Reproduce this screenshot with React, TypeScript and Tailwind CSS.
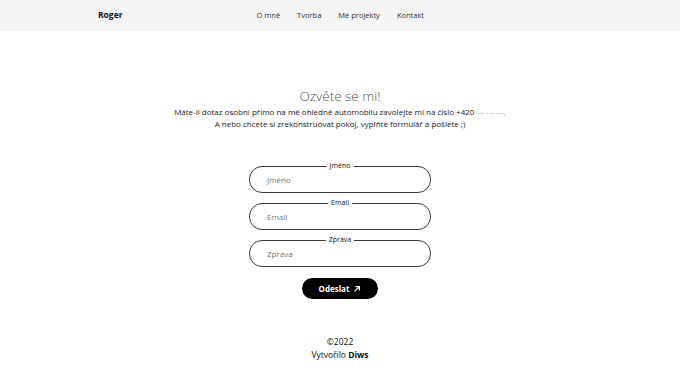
import React from "react";

function Field({ label }: { label: string }) {
  return (
    <div className="relative w-[182px] h-[27px] rounded-[13px] border-[1.5px] border-[#3a3a3a] flex items-center px-[17px]">
      <span className="absolute -top-[7px] left-1/2 -translate-x-1/2 bg-white px-[3px] text-[7px] leading-[12px] text-[#111]">{label}</span>
      <span className="text-[8px] text-[#777]">{label}</span>
    </div>
  );
}

export default function App() {
  return (
    <div className="w-[680px] h-[382px] bg-white flex flex-col" style={{ fontFamily: '"Open Sans", "Noto Sans", sans-serif' }}>
      <header className="h-[31px] bg-[#f5f5f5] flex items-center pl-[98px]">
        <span className="text-[8.5px] font-bold text-[#111]">Roger</span>
        <nav className="flex gap-[17px] ml-[134px] text-[7.5px] text-[#333]">
          <span>O mně</span>
          <span>Tvorba</span>
          <span>Mé projekty</span>
          <span>Kontakt</span>
        </nav>
      </header>
      <main className="flex flex-col items-center">
        <h1 className="mt-[56px] text-[13.5px] font-light text-[#555] leading-[18px]">Ozvěte se mi!</h1>
        <p className="mt-[1px] text-[8px] leading-[12px] text-[#222] text-center">
          Máte-li dotaz osobní přímo na mě ohledně automobilu zavolejte mi na číslo +420 <span className="text-[#aaa]">--- --- ---,</span>
          <br />A nebo chcete si zrekonstruovat pokoj, vyplňte formulář a pošlete ;)
        </p>
        <div className="mt-[36px] flex flex-col gap-[10px]">
          <Field label="Jméno" />
          <Field label="Email" />
          <Field label="Zpráva" />
        </div>
        <button className="mt-[11px] w-[76px] h-[21px] rounded-full bg-black text-white text-[8px] font-bold flex items-center justify-center gap-[4px]">
          Odeslat
          <svg width="8" height="8" viewBox="0 0 10 10" fill="none" stroke="white" strokeWidth="1.6">
            <path d="M2 8 L8 2 M3 2 H8 V7" />
          </svg>
        </button>
        <footer className="mt-[36px] flex flex-col items-center text-[8.5px] leading-[13px] text-[#111]">
          <span>©2022</span>
          <span>Vytvořilo <span className="font-bold">Diws</span></span>
        </footer>
      </main>
    </div>
  );
}
